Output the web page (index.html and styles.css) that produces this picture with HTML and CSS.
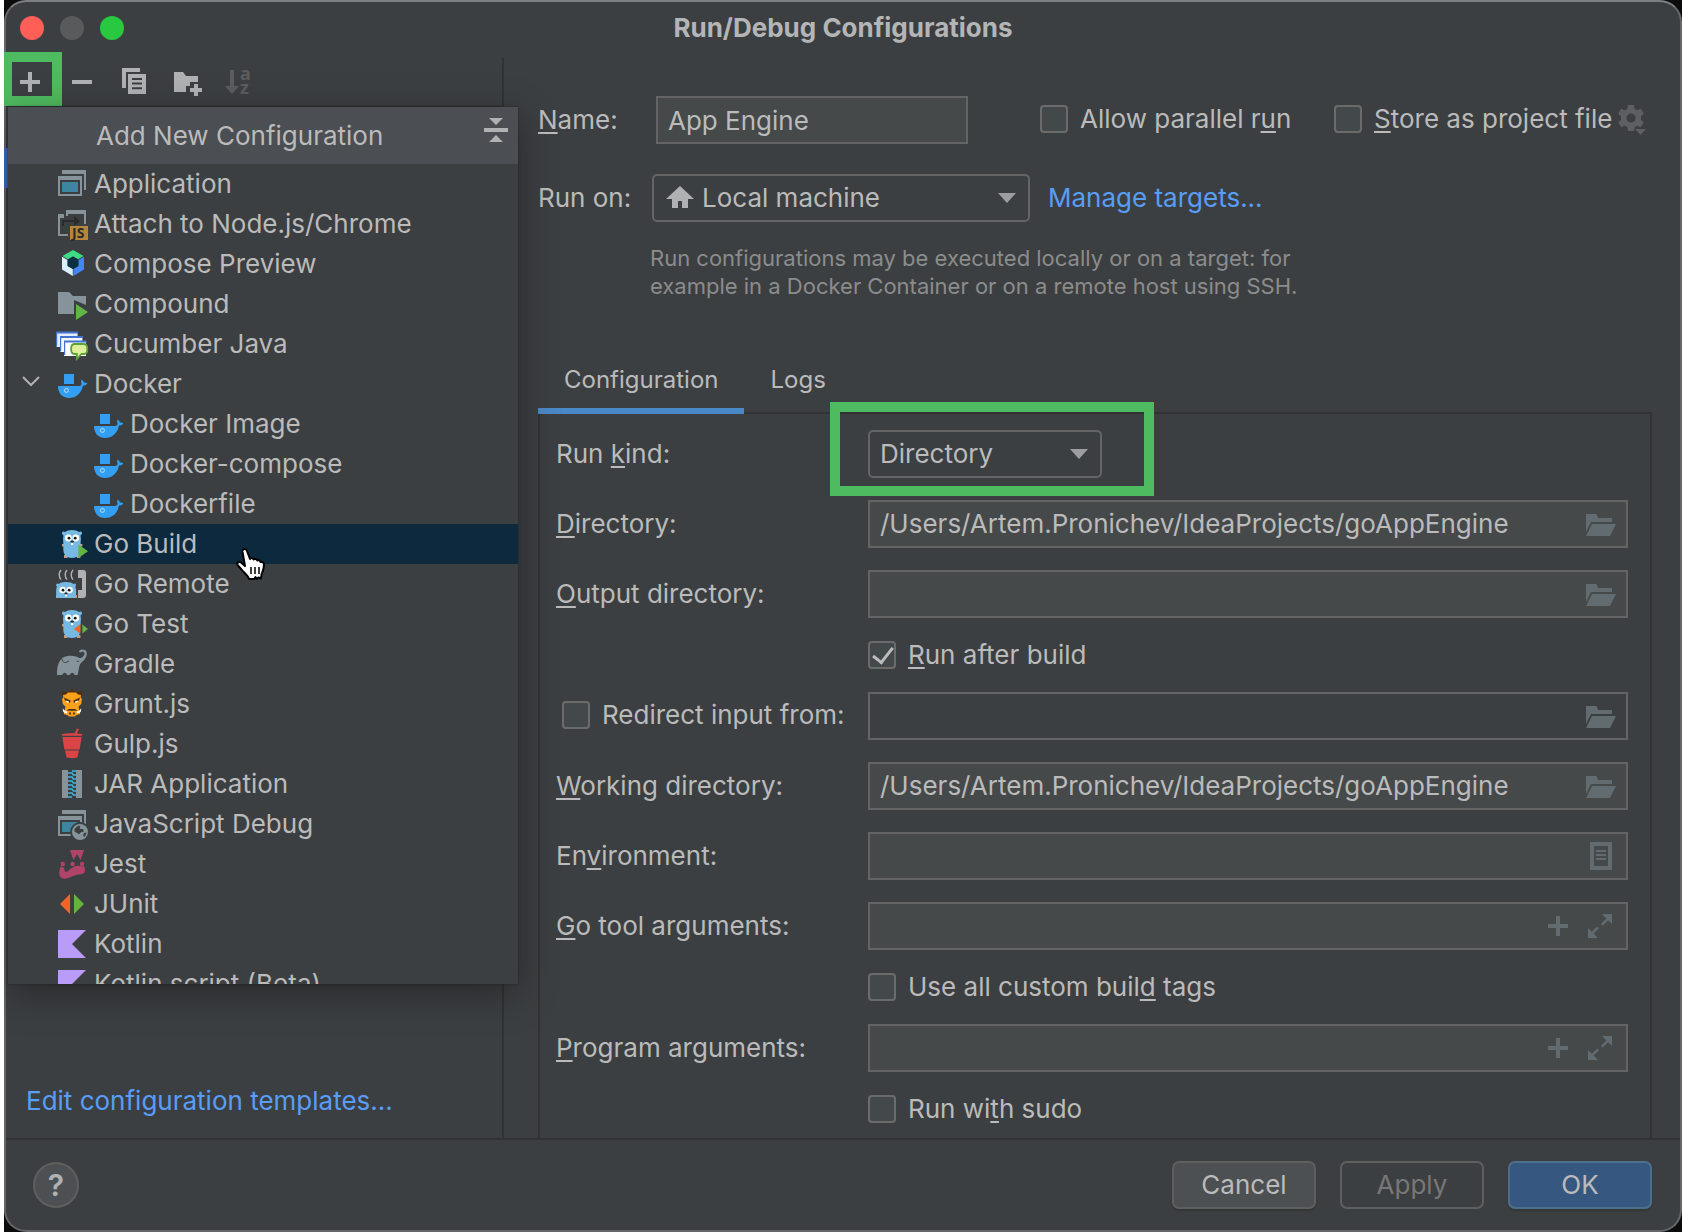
FILE: index.html
```html
<!DOCTYPE html>
<html lang="en">
<head>
    <meta charset="UTF-8">
    <meta name="viewport" content="width=device-width, initial-scale=1.0">
    <title>Run/Debug Configurations</title>
    <link rel="stylesheet" href="styles.css">
</head>
<body>
    <!-- shared icons -->
    <svg class="sprite" aria-hidden="true">
        <symbol id="i-docker" viewBox="0 0 16 16">
            <path fill="#339ff2" d="M4 3h5v5H4zM1 9h10.800c.8-.3 1.100-.8.9-1.500-.3-.5-.2-1.200.2-1.800.6.400 1 .9 1 1.600.5-.1 1.200 0 1.800.3-.4.800-1.200 1.200-2.200 1.200C12.600 13 10 15 6.500 15 3 15 1 12.500 1 9z"/>
            <circle cx="5.200" cy="11.200" r="1" fill="none" stroke="#d5ecfc" stroke-width=".4"/>
        </symbol>
        <symbol id="i-folder-open" viewBox="0 0 16 16">
            <path d="M1 3h5.300l.8 2H14v2H3.500L1 12z"/>
            <path d="M4 8h12l-3 6H1z"/>
        </symbol>
        <symbol id="i-plus" viewBox="0 0 16 16">
            <path d="M7 3h2v4h4v2H9v4H7V9H3V7h4z"/>
        </symbol>
        <symbol id="i-expand" viewBox="0 0 16 16">
            <path d="M9 2h5v5l-1.900-1.900-2.700 2.700-.9-.9 2.700-2.700zM2 14V9l1.900 1.900 2.700-2.700.9.900-2.700 2.700L7 14z"/>
        </symbol>
        <symbol id="i-kotlin" viewBox="0 0 16 16">
            <path fill="#b99bf8" d="M1 1h14L8 8l7 7H1z"/>
        </symbol>
        <symbol id="i-arrow" viewBox="0 0 18 10">
            <path d="M0 0h18L9 10z"/>
        </symbol>
        <symbol id="i-gopher" viewBox="0 0 16 16">
            <path fill="#c69a7e" d="M3 8h1.500v1.300H3zM12 8h1.200v1.300H12zM4 13.500h1.800V15H4zM10.500 13.500h1.700V15h-1.700z"/>
            <path fill="#76b9e3" d="M8 1c1.500 0 2.700.4 3.500 1 .5-.5 1.500-.3 1.500.5 0 .6-.3 1-.8 1.200.5 1.500.1 3 .1 4.600 0 2 .3 3.500-.8 5.200-.8 1.100-2 1.500-3.500 1.500s-2.700-.4-3.500-1.500C3.400 11.800 3.700 10.300 3.700 8.300c0-1.600-.4-3.100.1-4.600C3.300 3.500 3 3.100 3 2.500 3 1.700 4 1.500 4.500 2 5.300 1.400 6.500 1 8 1z"/>
            <circle cx="6.200" cy="5" r="1.700" fill="#fff"/>
            <circle cx="9.900" cy="5" r="1.700" fill="#fff"/>
            <circle cx="6.500" cy="5.100" r=".7" fill="#151515"/>
            <circle cx="9.600" cy="5.100" r=".7" fill="#151515"/>
            <path fill="#fff" d="M7.500 7.200h1.100v1.300H7.500z"/>
            <ellipse cx="8.050" cy="6.800" rx=".9" ry=".6" fill="#2b2b2b"/>
        </symbol>
    </svg>

    <div class="window">
        <header class="titlebar">
            <div class="lights">
                <button class="light light-close" aria-label="Close"></button>
                <button class="light light-min" aria-label="Minimize" disabled></button>
                <button class="light light-zoom" aria-label="Zoom"></button>
            </div>
            <h1>Run/Debug Configurations</h1>
        </header>

        <main>
            <aside class="sidebar">
                <div class="toolbar">
                    <button class="tool tool-add" aria-label="Add">
                        <svg class="icon" viewBox="0 0 16 16"><use href="#i-plus"/></svg>
                    </button>
                    <button class="tool" aria-label="Remove">
                        <svg class="icon" viewBox="0 0 16 16"><path d="M3 7h10v2H3z"/></svg>
                    </button>
                    <button class="tool" aria-label="Copy">
                        <svg class="icon" viewBox="0 0 16 16">
                            <path d="M2 1h9v2H4v8H2z"/>
                            <path fill-rule="evenodd" d="M5 4h9v10H5zM7 6v1h5V6zM7 8.300v1h5v-1zM7 10.600v1h5v-1z"/>
                        </svg>
                    </button>
                    <button class="tool" aria-label="New folder">
                        <svg class="icon" viewBox="0 0 16 16">
                            <path d="M2 3h4.500l1.500 2h6v3h-4v2H8v3H2z"/>
                            <path d="M12 9h2v2h2v2h-2v2h-2v-2h-2v-2h2z"/>
                        </svg>
                    </button>
                    <button class="tool" aria-label="Sort" disabled>
                        <svg class="icon" viewBox="0 0 16 16">
                            <path d="M4 2h2v8h2.500L5 14 1.500 10H4z"/>
                            <text x="9" y="7" font-size="9">a</text>
                            <text x="9" y="14" font-size="9">z</text>
                        </svg>
                    </button>
                </div>
                <div class="tree-selection"></div>

                <div class="popup">
                    <div class="popup-header">
                        <span>Add New Configuration</span>
                        <button class="collapse" aria-label="Collapse all">
                            <svg viewBox="0 0 24 24"><path d="M5 0h14l-7 7zM0 10h24v4H0zM12 17l7 7H5z"/></svg>
                        </button>
                    </div>
                    <ul class="config-list">
                        <li>
                            <svg class="icon" viewBox="0 0 16 16">
                                <path fill="#87939a" fill-rule="evenodd" d="M3 1h12v10h-1V3H3zM1 4h12v10H1zM2 6v7h10V6z"/>
                                <path fill="#3e86a0" d="M3 7h8v5H3z"/>
                            </svg>
                            Application
                        </li>
                        <li>
                            <svg class="icon" viewBox="0 0 16 16">
                                <path fill="#87939a" d="M5 1h10v7h-1V3H6v1H5zM1 3h3v2H2v8h4v1H1z"/>
                                <path fill="#2b2b2b" d="M3 6h6V4l3 2.500L9 9V7H4v2H3z"/>
                                <path fill="#b8863b" d="M7 9h9v7H7z"/>
                                <text x="8" y="15" font-size="7" fill="#2b2b2b">JS</text>
                            </svg>
                            Attach to Node.js/Chrome
                        </li>
                        <li>
                            <svg class="icon" viewBox="0 0 16 16">
                                <path fill="#3ddc84" d="M8.500 1l5.300 3L11 5.600 8.500 4.200 6 5.600 3.200 4z"/>
                                <path fill="#d7effe" d="M3 4.400l2.800 1.600v3L8.400 10.500V14L3 10.800z"/>
                                <path fill="#4285f4" d="M14 4.400L11.200 6v3L8.700 10.500V14L14 10.800z"/>
                                <path fill="#083042" d="M8.500 4.200L11.200 5.800v3.200L8.500 10.500 5.800 9V5.800z"/>
                            </svg>
                            Compose Preview
                        </li>
                        <li>
                            <svg class="icon" viewBox="0 0 16 16">
                                <path fill="#87939a" d="M1 2h5.500l2 2H15v4.500L9 6v7H1z"/>
                                <path fill="#62b543" d="M10 8l6 4-6 4z"/>
                            </svg>
                            Compound
                        </li>
                        <li>
                            <svg class="icon" viewBox="0 0 16 16">
                                <path fill="#e4edfb" d="M.3 2h10.500v7.500H.3z"/>
                                <path fill="#4373cf" d="M0 1.800h11v1H0zM0 2h.6v7H0z"/>
                                <path fill="#f4f8ff" d="M2.200 4.500h11V12h-11z"/>
                                <path fill="#4373cf" d="M2 4h11.500v1H2zM2 4h.6v7.500H2z"/>
                                <path fill="#fff" d="M4 7h11v7H4z"/>
                                <path fill="#4373cf" d="M4 6.300h11.300v1H4zM4 6.500h.6v7H4z"/>
                                <path fill="#dff09d" stroke="#5ca136" stroke-width=".9" d="M9.300 8h4.600a1.700 1.700 0 0 1 1.700 1.700v1.600a1.700 1.700 0 0 1-1.700 1.700H12.800l-2.400 2.500V13h-1.100A1.700 1.700 0 0 1 7.600 11.300V9.700A1.700 1.700 0 0 1 9.300 8z"/>
                            </svg>
                            Cucumber Java
                        </li>
                        <li class="group">
                            <svg class="chevron" viewBox="0 0 18 10"><path d="M1 1l8 8 8-8"/></svg>
                            <svg class="icon" viewBox="0 0 16 16"><use href="#i-docker"/></svg>
                            Docker
                        </li>
                        <li class="child"><svg class="icon" viewBox="0 0 16 16"><use href="#i-docker"/></svg>Docker Image</li>
                        <li class="child"><svg class="icon" viewBox="0 0 16 16"><use href="#i-docker"/></svg>Docker-compose</li>
                        <li class="child"><svg class="icon" viewBox="0 0 16 16"><use href="#i-docker"/></svg>Dockerfile</li>
                        <li class="selected">
                            <svg class="icon" viewBox="0 0 16 16">
                                <use href="#i-gopher"/>
                                <path fill="#62b543" d="M11.200 8.200L16 11.600l-4.800 3.400z"/>
                            </svg>
                            Go Build
                            <svg class="cursor" viewBox="0 0 30 34">
                                <path fill="#fff" stroke="#000" stroke-width="2" stroke-linejoin="round" d="M9 19L6.500 5C6 1.500 10 1 11 4l3 8c1-1.500 3-1 3.500.5 1.500-1.200 3.300-.5 3.800 1 1.500-.8 3 0 3.200 1.500 2-.5 3.500.8 3.500 2.500 0 5-1.500 7-2.500 10l-.5 4-2.500-1-1.500 1.500-1.500-2-1 2H13c-1-4-5-6-7.500-9.500L1.500 18c-1-2 1.500-4 3.500-2.500z"/>
                                <path fill="none" stroke="#000" stroke-width="1.500" d="M15 20v7M19 20v7M23 20v7"/>
                            </svg>
                        </li>
                        <li>
                            <svg class="icon" viewBox="0 0 16 16">
                                <path fill="none" stroke="#afb1b3" stroke-width=".7" d="M2.500 1c-1.200 1.300-1.200 3.500 0 4.800M5.500 1c-1.200 1.300-1.200 3.500 0 4.800M8.500 1C7.300 2.300 7.300 4.500 8.500 5.800"/>
                                <path fill="#afb1b3" d="M11 1h2.500A1.500 1.500 0 0 1 15 2.500v11a1.500 1.500 0 0 1-1.500 1.500H11v-4h2V5h-2z"/>
                                <path fill="#c69a7e" d="M0 13.500h1V15H0zM9.500 13.500h1V15h-1z"/>
                                <path fill="#76b9e3" d="M5 7c2 0 3 .4 3.700 1 .8-.8 1.800.2 1 1.200.4 1.500.5 3.300.2 5.800H.2C0 12.500 0 10.700.4 9.200-.5 8.200.6 7.200 1.300 8 2 7.400 3 7 5 7z"/>
                                <circle cx="3.300" cy="11" r="1.600" fill="#fff"/>
                                <circle cx="6.800" cy="11" r="1.600" fill="#fff"/>
                                <circle cx="3.500" cy="11.100" r=".7" fill="#151515"/>
                                <circle cx="6.600" cy="11.100" r=".7" fill="#151515"/>
                                <path fill="#fff" d="M4.500 13h1v1.200h-1z"/>
                                <ellipse cx="5" cy="12.700" rx=".8" ry=".5" fill="#2b2b2b"/>
                            </svg>
                            Go Remote
                        </li>
                        <li>
                            <svg class="icon" viewBox="0 0 16 16">
                                <use href="#i-gopher"/>
                                <path fill="#f26522" d="M12.300 8v5L9 10.500z"/>
                                <path fill="#3c3f41" d="M12.300 8h1v5h-1z"/>
                                <path fill="#62b543" d="M13.200 8.200l2.800 2.300-2.800 2.300z"/>
                            </svg>
                            Go Test
                        </li>
                        <li>
                            <svg class="icon" viewBox="0 0 16 16">
                                <path fill="#87939a" d="M.5 13.500C.4 9.500 1.200 6.500 3.500 4.800c2-1.200 4.500-1 6.500-.6 1.200.6 2.300 1.200 3.200.4.800-.8 1.200-1.400 1-2-.4-1-1.600-.8-2.200-.2l-.6-.8C12.300.4 14.800.3 15.300 2c.5 2-.8 3.800-2.300 5-1 .8-1.300 1.800-1.500 3l-.7 3.500H9.300C8.800 12 7.400 12 7 13.500H5.500C5 12 3.700 12 3.200 13.500z"/>
                                <path fill="none" stroke="#3c3f41" stroke-width=".5" d="M3 5.500c.3 2 2 2.300 3.500.8M10.300 6.500c.5.400 1 .3 1.200-.1"/>
                            </svg>
                            Gradle
                        </li>
                        <li>
                            <svg class="icon" viewBox="0 0 16 16">
                                <path fill="#4f2f12" d="M3.200 1.200l1.500.9L6.500 1.500 8 .6l1.500.9 1.800.6 1.500-.9.300 2-.9 1.300H3.800L2.900 3.200z"/>
                                <path fill="#f9a11b" d="M3.500 3.500L5 3.200 6 2.200h4l1 1 1.500.3-.2 1.200.7.800-.4 2.500-1.300 1.200.4 2.300.3 1.500-2 .6L9.500 14.300h-3L5.800 13.600l-1.900-.6.400-1.500.4-2.300L3.400 8 3 5.500l.7-.8z"/>
                                <path fill="#4f2f12" d="M4 4.700l3.300 1.500-.3 1.300L4.500 6.300zM12 4.700L8.700 6.200l.3 1.300 2.500-1.200zM5.300 11.200L6.500 10.500h3l1.200.7-1 .2H6.300zM6.600 12.300h.9v.9h-.9zM8.500 12.300h.9v.9h-.9z"/>
                                <path fill="#fff" d="M5 6.300l1.500.5-.2.600-1-.3zM11 6.300l-1.500.5.200.6 1-.3zM3.500 10.200c-.4 1.600.5 2.400 2 2.400l.2-.9c-1 0-1.500-.5-2.200-1.500zM12.500 10.200c.4 1.600-.5 2.400-2 2.400l-.2-.9c1 0 1.500-.5 2.200-1.500z"/>
                            </svg>
                            Grunt.js
                        </li>
                        <li>
                            <svg class="icon" viewBox="0 0 16 16">
                                <path fill="#db4446" d="M10.500.3l1 .2-1.300 2.600H9zM3 3c3-.5 7-.5 10 0v.9H3zM3.200 4.500h9.600l-1 6.300H4.200zM4.500 11.300h7l-.8 3.500c-1.500.4-4 .4-5.400 0z"/>
                            </svg>
                            Gulp.js
                        </li>
                        <li>
                            <svg class="icon" viewBox="0 0 16 16">
                                <path fill="#87939a" d="M3 1h3v14H3zM10 1h3v14h-3z"/>
                                <path fill="none" stroke="#40b6e0" stroke-width=".7" d="M8 1.500h2M6 2.500h2l.7 1H10M6 4.500h2l.7 1H10M6 6.500h2l.7 1H10M6 8.500h2l.7 1H10M6 10.500h2l.7 1H10M6 12.500h2l.7 1H10M6 14.500h2"/>
                            </svg>
                            JAR Application
                        </li>
                        <li>
                            <svg class="icon" viewBox="0 0 16 16">
                                <path fill="#87939a" fill-rule="evenodd" d="M3 1h12v7h-1V3H3zM1 4h12v10H1zM2 6v7h10V6z"/>
                                <path fill="#3e86a0" d="M3 7h8v5H3z"/>
                                <circle cx="12" cy="12" r="5" fill="#3c3f41"/>
                                <circle cx="12" cy="12" r="4" fill="#87939a"/>
                                <path fill="#3c3f41" d="M9.200 10.500l2-1.700 1 .5-.4 1.200h1.700l.5 1.200-1.500.4-1 1-2.200-1.400zM14 12.500l1.300-.3-.8 2.200-1-.4z"/>
                            </svg>
                            JavaScript Debug
                        </li>
                        <li>
                            <svg class="icon" viewBox="0 0 16 16">
                                <path fill="#b04468" d="M7 1h7l-1.700 5L10.500 3 8.700 6z"/>
                                <circle cx="3.400" cy="8" r="1.100" fill="#b04468"/>
                                <circle cx="8.300" cy="8" r="1.100" fill="#b04468"/>
                                <circle cx="13" cy="8" r="1.100" fill="#b04468"/>
                                <path fill="#b04468" d="M2.500 9c1 .8 1.800.7 1.800 2 0 1 .8 1.300 1.700.5 1.300-1.200 3.500-3.300 6-2.500 1 .5 1.500-.3 2 .2.800 1.300.7 3-.5 3.600-1.500.7-3 .3-5 1.200-2 .9-3.600 1.600-5 1.300C1.500 14.900 1 12.500 2.500 9z"/>
                            </svg>
                            Jest
                        </li>
                        <li>
                            <svg class="icon" viewBox="0 0 16 16">
                                <path fill="#f26522" d="M7 3v10L2 8z"/>
                                <path fill="#62b543" d="M9 3v10l5-5z"/>
                            </svg>
                            JUnit
                        </li>
                        <li><svg class="icon" viewBox="0 0 16 16"><use href="#i-kotlin"/></svg>Kotlin</li>
                        <li><svg class="icon" viewBox="0 0 16 16"><use href="#i-kotlin"/></svg>Kotlin script (Beta)</li>
                    </ul>
                </div>

                <a class="link templates" href="#">Edit configuration templates...</a>
            </aside>

            <section class="content">
                <div class="name-row">
                    <label for="name"><u>N</u>ame:</label>
                    <input class="field" id="name" type="text" value="App Engine">
                    <label class="check"><input type="checkbox"><span>Allow parallel r<u>u</u>n</span></label>
                    <div class="store">
                        <label class="check"><input type="checkbox"><span><u>S</u>tore as project file</span></label>
                        <button class="gear" aria-label="Storage settings" disabled>
                            <svg class="icon" viewBox="0 0 16 16">
                                <path fill-rule="evenodd" d="M6 .5h3l.3 1.900 1.300.7 1.800-.7 1.500 2.500L12.500 6v2l1.400 1.100-1.500 2.500-1.800-.7-1.300.7L9 13.500H6l-.3-1.900-1.300-.7-1.800.7-1.500-2.500L2.500 8V6L1.100 4.900l1.500-2.500 1.800.7 1.300-.7zM7.500 4.700a2.300 2.300 0 1 0 0 4.600 2.300 2.300 0 0 0 0-4.600z"/>
                                <path d="M9.500 12.500H15L12.200 15.500z"/>
                            </svg>
                        </button>
                    </div>
                </div>

                <div class="run-row">
                    <label for="target">Run on:</label>
                    <div class="combo combo-target">
                        <svg class="icon" viewBox="0 0 16 16"><path d="M8 2l7 6.500h-3V13H9V9.500H7V13H4V8.500H1z"/></svg>
                        <select id="target"><option>Local machine</option></select>
                        <svg class="arrow" viewBox="0 0 18 10"><use href="#i-arrow"/></svg>
                    </div>
                    <a class="link" href="#">Manage targets...</a>
                </div>
                <p class="hint">Run configurations may be executed locally or on a target: for<br>example in a Docker Container or on a remote host using SSH.</p>

                <div class="tabs" role="tablist">
                    <button class="tab active" role="tab" aria-selected="true">Configuration</button>
                    <button class="tab" role="tab" aria-selected="false">Logs</button>
                </div>

                <form class="panel">
                    <div class="row">
                        <label for="kind">Run <u>k</u>ind:</label>
                        <div class="combo combo-kind">
                            <select id="kind"><option>Directory</option></select>
                            <svg class="arrow" viewBox="0 0 18 10"><use href="#i-arrow"/></svg>
                        </div>
                    </div>
                    <div class="row">
                        <label for="dir"><u>D</u>irectory:</label>
                        <div class="field">
                            <input id="dir" type="text" value="/Users/Artem.Pronichev/IdeaProjects/goAppEngine">
                            <svg class="icon" viewBox="0 0 16 16"><use href="#i-folder-open"/></svg>
                        </div>
                    </div>
                    <div class="row">
                        <label for="out"><u>O</u>utput directory:</label>
                        <div class="field">
                            <input id="out" type="text">
                            <svg class="icon" viewBox="0 0 16 16"><use href="#i-folder-open"/></svg>
                        </div>
                    </div>
                    <div class="row row-check">
                        <label class="check"><input type="checkbox" checked><span><u>R</u>un after build</span></label>
                    </div>
                    <div class="row">
                        <label class="check check-redirect"><input type="checkbox"><span>Redirect input from:</span></label>
                        <div class="field disabled">
                            <input type="text" aria-label="Redirect input from" disabled>
                            <svg class="icon" viewBox="0 0 16 16"><use href="#i-folder-open"/></svg>
                        </div>
                    </div>
                    <div class="row">
                        <label for="work"><u>W</u>orking directory:</label>
                        <div class="field">
                            <input id="work" type="text" value="/Users/Artem.Pronichev/IdeaProjects/goAppEngine">
                            <svg class="icon" viewBox="0 0 16 16"><use href="#i-folder-open"/></svg>
                        </div>
                    </div>
                    <div class="row">
                        <label for="env">En<u>v</u>ironment:</label>
                        <div class="field">
                            <input id="env" type="text">
                            <svg class="icon" viewBox="0 0 16 16"><path fill-rule="evenodd" d="M3 1h11v14H3zM5 3v10h7V3zM6 5h5v1H6zM6 7h5v1H6zM6 9h5v1H6z"/></svg>
                        </div>
                    </div>
                    <div class="row">
                        <label for="goargs"><u>G</u>o tool arguments:</label>
                        <div class="field">
                            <input id="goargs" type="text">
                            <svg class="icon" viewBox="0 0 16 16"><use href="#i-plus"/></svg>
                            <svg class="icon" viewBox="0 0 16 16"><use href="#i-expand"/></svg>
                        </div>
                    </div>
                    <div class="row row-check">
                        <label class="check"><input type="checkbox"><span>Use all custom buil<u>d</u> tags</span></label>
                    </div>
                    <div class="row">
                        <label for="args"><u>P</u>rogram arguments:</label>
                        <div class="field">
                            <input id="args" type="text">
                            <svg class="icon" viewBox="0 0 16 16"><use href="#i-plus"/></svg>
                            <svg class="icon" viewBox="0 0 16 16"><use href="#i-expand"/></svg>
                        </div>
                    </div>
                    <div class="row row-check">
                        <label class="check"><input type="checkbox"><span>Run wi<u>t</u>h sudo</span></label>
                    </div>
                </form>
            </section>
        </main>

        <footer>
            <button class="help" aria-label="Help">?</button>
            <button class="btn">Cancel</button>
            <button class="btn btn-disabled" disabled>Apply</button>
            <button class="btn btn-primary">OK</button>
        </footer>
    </div>
</body>
</html>
```
FILE: styles.css
```css
* {
    box-sizing: border-box;
}
html {
    background-color: #0c0c0c;
}
body {
    margin: 0;
    border-left: 4px solid #ffffff;
    font-family: Inter, "Liberation Sans", sans-serif;
    font-size: 26px;
    line-height: 30px;
    color: #bbbbbb;
}
button, input, select {
    font: inherit;
    color: inherit;
    margin: 0;
    padding: 0;
    border: none;
    background: none;
}
u {
    text-decoration-thickness: 2px;
    text-underline-offset: 3px;
    text-decoration-skip-ink: none;
}
.sprite {
    display: none;
}
.icon {
    flex: none;
    width: 32px;
    height: 32px;
    overflow: visible;
}
.icon text {
    font-family: "Open Sans", sans-serif;
    font-weight: bold;
}
.link {
    color: #589df6;
    text-decoration: none;
}
.window {
    display: flex;
    flex-direction: column;
    min-height: 100vh;
    border: 2px solid #646667;
    border-top-color: #7d8081;
    border-radius: 22px;
    background-color: #3c3f41;
}

/* title bar */
.titlebar {
    display: grid;
    grid-template-columns: 1fr auto 1fr;
    align-items: center;
    height: 56px;
    padding: 0 14px 4px;
}
.titlebar h1 {
    margin: 0;
    font-size: 26px;
    font-weight: 700;
    color: #b4b5b6;
}
.lights {
    display: flex;
    gap: 16px;
}
.light {
    width: 24px;
    height: 24px;
    border-radius: 50%;
}
.light-close {
    background-color: #ff5f57;
}
.light-min {
    background-color: #595a5c;
}
.light-zoom {
    background-color: #28c840;
}

main {
    display: flex;
    flex: 1;
}

/* left side */
.sidebar {
    position: relative;
    display: flex;
    flex-direction: column;
    flex: none;
    width: 498px;
    border-right: 2px solid #323232;
}
.toolbar {
    display: flex;
    align-items: center;
    gap: 20px;
    height: 49px;
    padding-left: 8px;
    border-bottom: 1px solid #2d2f30;
    fill: #afb1b3;
}
.tool {
    position: relative;
    display: flex;
}
.tool:disabled {
    fill: #5b5d5f;
}
.tool-add::after {
    content: "";
    position: absolute;
    inset: -14px -16px -8px -12px;
    border: 10px solid #4fbb60;
}
.tree-selection {
    height: 40px;
    margin: 41px 0 0 -2px;
    background-color: #3f6fc9;
}
.templates {
    margin: auto 0 22px 20px;
}
.popup {
    position: absolute;
    top: 49px;
    bottom: 154px;
    left: 2px;
    width: 510px;
    overflow: hidden;
    background-color: #3c3f41;
    box-shadow: 0 0 2px #232323, 0 10px 36px rgba(0, 0, 0, 0.35);
}
.popup-header {
    display: flex;
    align-items: center;
    justify-content: space-between;
    height: 57px;
    padding: 0 10px 0 88px;
    background-color: #4b4e52;
}
.collapse {
    align-self: flex-start;
    padding-top: 11px;
}
.collapse svg {
    display: block;
    width: 24px;
    height: 24px;
    fill: #afb1b3;
}
.config-list {
    margin: 0;
    padding: 0;
    list-style: none;
}
.config-list li {
    position: relative;
    display: flex;
    align-items: center;
    gap: 6px;
    height: 40px;
    padding-left: 48px;
    white-space: nowrap;
}
.config-list .group {
    padding-left: 14px;
}
.config-list .child {
    padding-left: 84px;
}
.config-list .selected {
    background-color: #0d293e;
}
.chevron {
    width: 18px;
    height: 10px;
    margin: -6px 10px 0 0;
    fill: none;
    stroke: #afb1b3;
    stroke-width: 2;
    overflow: visible;
}
.cursor {
    position: absolute;
    top: 23px;
    left: 228px;
    z-index: 1;
    width: 30px;
    height: 34px;
    overflow: visible;
}

/* right side */
.content {
    display: flex;
    flex-direction: column;
    flex: 1;
    padding: 38px 28px 0 34px;
}
.name-row {
    display: grid;
    grid-template-columns: 118px 384px 294px auto;
    align-items: center;
    white-space: nowrap;
}
.name-row .field {
    width: 312px;
}
.store {
    display: flex;
    align-items: center;
    gap: 4px;
}
.gear {
    display: flex;
    fill: #5d5f61;
}
.field {
    display: flex;
    align-items: center;
    gap: 10px;
    width: 100%;
    height: 48px;
    padding: 0 10px;
    border: 2px solid #646464;
    background-color: #45494a;
    fill: #626b70;
}
.field input {
    flex: 1;
    min-width: 0;
    outline: none;
}
.field.disabled {
    background-color: #3c3f41;
}
.check {
    display: flex;
    align-items: center;
    gap: 12px;
    padding-bottom: 2px;
}
.check input {
    appearance: none;
    position: relative;
    flex: none;
    width: 28px;
    height: 28px;
    border: 2px solid #6b6b6b;
    border-radius: 4px;
    background-color: #43494a;
}
.check input:checked::after {
    content: "";
    position: absolute;
    top: 0;
    left: 7px;
    width: 9px;
    height: 17px;
    border: solid #bbbbbb;
    border-width: 0 3px 3px 0;
    transform: rotate(38deg);
}
.run-row {
    display: flex;
    align-items: center;
    margin-top: 30px;
}
.run-row label {
    width: 114px;
}
.run-row .link {
    margin-left: 18px;
}
.combo {
    position: relative;
    display: flex;
    align-items: center;
    height: 48px;
    padding: 0 12px 0 10px;
    border: 2px solid #646464;
    border-radius: 5px;
    fill: #afb1b3;
}
.combo select {
    flex: 1;
    appearance: none;
    outline: none;
}
.combo-target {
    width: 378px;
    gap: 6px;
}
.combo-kind {
    width: 234px;
}
/* highlight frame */
.combo-kind::after {
    content: "";
    position: absolute;
    inset: -30px -54px -20px -40px;
    border: 10px solid #4fbb60;
    pointer-events: none;
}
.arrow {
    width: 18px;
    height: 10px;
    fill: #9c9ea0;
}
.hint {
    margin: 22px 0 0 112px;
    font-size: 22px;
    line-height: 28px;
    color: #8c8c8c;
}
.tabs {
    display: flex;
    margin-top: 52px;
    box-shadow: inset 0 -2px #323232;
}
.tab {
    height: 62px;
    padding: 0 26px;
    border-bottom: 6px solid transparent;
    font-size: 24px;
}
.tab.active {
    border-bottom-color: #4a88c7;
}
.panel {
    display: flex;
    flex-direction: column;
    flex: 1;
    gap: 22px;
    padding: 16px 22px 14px 16px;
    border: solid #323232;
    border-width: 0 2px;
}
.row {
    display: grid;
    grid-template-columns: 312px 1fr;
    align-items: center;
}
.row-check {
    height: 30px;
}
.row-check .check {
    grid-column: 2;
}
.check-redirect {
    padding-left: 6px;
    white-space: nowrap;
}

/* buttons */
footer {
    display: flex;
    align-items: center;
    gap: 24px;
    height: 92px;
    padding: 0 28px 0 27px;
    border-top: 2px solid #323232;
}
.help {
    width: 46px;
    height: 46px;
    margin-right: auto;
    border: 2px solid #5e6060;
    border-radius: 50%;
    background-color: #4c5052;
    font-size: 30px;
    font-weight: 600;
    color: #afb1b3;
}
.btn {
    width: 144px;
    height: 48px;
    border: 2px solid #5e6060;
    border-radius: 7px;
    background-color: #4c5052;
    box-shadow: 0 2px 2px rgba(0, 0, 0, 0.15);
}
.btn-disabled {
    background: none;
    box-shadow: none;
    color: #777777;
}
.btn-primary {
    border-color: #4c708c;
    background-color: #365880;
}
```
